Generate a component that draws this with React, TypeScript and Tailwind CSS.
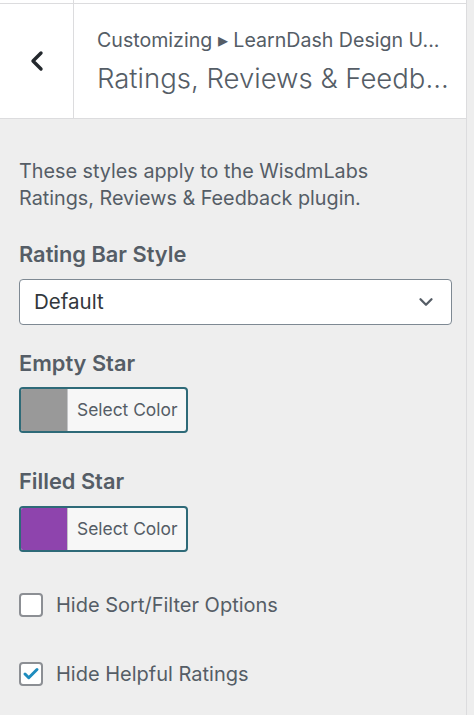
import React, { useState } from 'react'
import { ChevronDown, Check } from 'lucide-react'

const font = { fontFamily: 'Inter, "Noto Sans", sans-serif' }

const ColorButton: React.FC<{ swatch: string }> = ({ swatch }) => (
  <button className="flex h-[46px] w-[169px] overflow-hidden rounded-[4px] border-2 border-[#2e6a78] bg-[#f7f7f7] text-left">
    <span className={`h-full w-[47px] border-r border-[#c3c4c7] ${swatch}`}></span>
    <span className="flex flex-1 items-center pl-[9px] text-[17.4px] text-[#555d66]">Select Color</span>
  </button>
)

const Checkbox: React.FC<{ checked: boolean; onToggle: () => void; label: string; className?: string }> = ({
  checked,
  onToggle,
  label,
  className,
}) => (
  <label className={`flex cursor-pointer items-center gap-[13px] ${className ?? ''}`} onClick={onToggle}>
    <span className="flex h-[24px] w-[24px] items-center justify-center rounded-[4px] border-2 border-[#8c8f94] bg-white">
      {checked && <Check className="h-[18px] w-[18px] text-[#1e8cbe]" strokeWidth={4} />}
    </span>
    <span className="text-[20px] leading-[24px] text-[#555d66]">{label}</span>
  </label>
)

export default function App() {
  const [hideSort, setHideSort] = useState(false)
  const [hideHelpful, setHideHelpful] = useState(true)

  return (
    <div className="flex min-h-[715px] w-[474px] bg-[#eeeeee]" style={font}>
      <div className="flex w-[467px] flex-col border-r border-[#dcdcde]">
        {/* top strip */}
        <div className="flex h-[3px] bg-white">
          <div className="w-[74px] border-r border-[#dcdcde]"></div>
        </div>
        <div className="flex h-[116px] border-y border-[#dcdcde] bg-white">
          <button className="flex w-[74px] items-center justify-center border-r border-[#dcdcde] text-[#23282d]">
            <svg width="16" height="22" viewBox="0 0 16 22" fill="none">
              <polyline points="12,3 4,11 12,19" stroke="currentColor" strokeWidth="3.4" strokeLinecap="round" strokeLinejoin="round" />
            </svg>
          </button>
          <div className="flex min-w-0 flex-1 flex-col justify-center pl-[23px] pr-[10px]">
            <div className="whitespace-nowrap text-[19.6px] leading-[24px] text-[#555d66]">
              Customizing ▸ LearnDash Design U...
            </div>
            <div className="mt-[10px] whitespace-nowrap text-[27.5px] font-light leading-[32px] text-[#555d66]">
              Ratings, Reviews &amp; Feedb...
            </div>
          </div>
        </div>

        <div className="px-[19px] pt-[39px]">
          <p className="max-w-[400px] text-[19.8px] leading-[27px] text-[#555d66]">
            These styles apply to the WisdmLabs Ratings, Reviews &amp; Feedback plugin.
          </p>

          <div className="mt-[28px] text-[21.8px] font-semibold leading-[28px] text-[#555d66]">Rating Bar Style</div>
          <div className="mt-[11px] flex h-[46px] w-[433px] items-center justify-between rounded-[4px] border border-[#7e8993] bg-white pl-[14px] pr-[14px]">
            <span className="text-[20.5px] text-[#32373c]">Default</span>
            <ChevronDown className="h-[22px] w-[22px] text-[#555d66]" strokeWidth={2.5} />
          </div>

          <div className="mt-[24px] text-[21.8px] font-semibold leading-[28px] text-[#555d66]">Empty Star</div>
          <div className="mt-[10px]">
            <ColorButton swatch="bg-[#999999]" />
          </div>

          <div className="mt-[34px] text-[21.8px] font-semibold leading-[28px] text-[#555d66]">Filled Star</div>
          <div className="mt-[11px]">
            <ColorButton swatch="bg-[#8e44ad]" />
          </div>

          <Checkbox
            className="mt-[41px]"
            checked={hideSort}
            onToggle={() => setHideSort(!hideSort)}
            label="Hide Sort/Filter Options"
          />
          <Checkbox
            className="mt-[45px]"
            checked={hideHelpful}
            onToggle={() => setHideHelpful(!hideHelpful)}
            label="Hide Helpful Ratings"
          />
        </div>
      </div>
    </div>
  )
}
